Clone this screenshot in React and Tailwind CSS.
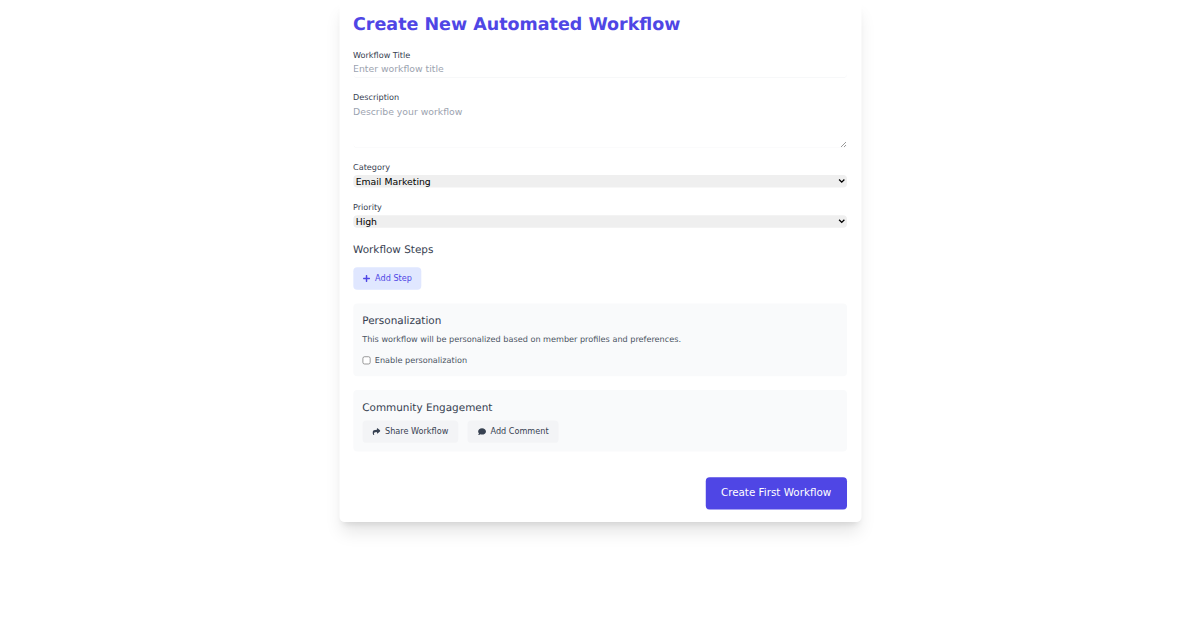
import { FaPlus, FaShare, FaComment } from 'react-icons/fa';

const fieldLabel = 'block text-[12.3px] leading-4 text-[#374151]';
const selectBox = 'block h-[19px] w-full rounded-md bg-[#efefef] text-[14.1px] leading-[19px] text-black';
const softBtn = 'flex h-[34px] items-center gap-[7px] rounded-md bg-[#f3f4f6] px-[15.5px] text-[12.3px] text-[#374151]';

export default function App() {
  return (
    <div className="h-[630px] overflow-hidden bg-white font-['DejaVu_Sans',sans-serif] [text-rendering:geometricPrecision]">
      <div className="mx-auto h-[791px] w-[791px] origin-top scale-[0.66] rounded-lg bg-white pt-[19px] pr-[22.5px] pl-[20.5px] shadow-xl">
        <h2 className="text-[26.5px] leading-9 font-bold text-[#4f46e5]">Create New Automated Workflow</h2>

        <div className="mt-[20.5px]">
          <label className={fieldLabel}>Workflow Title</label>
          <input
            className="block h-[26.5px] w-full rounded-md border-b border-[#f3f4f6] text-[14.1px] outline-none placeholder:text-[#9ca3af]"
            placeholder="Enter workflow title"
          />
        </div>

        <div className="mt-[21px]">
          <label className={fieldLabel}>Description</label>
          <textarea
            className="block h-[69px] w-full rounded-md border-b border-[#f3f4f6] pt-[4px] text-[14.1px] outline-none placeholder:text-[#9ca3af]"
            placeholder="Describe your workflow"
          />
        </div>

        <div className="mt-[21px]">
          <label className={fieldLabel}>Category</label>
          <select className={`mt-1 ${selectBox}`}>
            <option>Email Marketing</option>
          </select>
        </div>

        <div className="mt-[22px]">
          <label className={fieldLabel}>Priority</label>
          <select className={`mt-1 ${selectBox}`}>
            <option>High</option>
          </select>
        </div>

        <h3 className="mt-[21.5px] text-[15.8px] leading-6 text-[#374151]">Workflow Steps</h3>

        <button className="mt-[14px] flex h-[34px] items-center gap-[7px] rounded-md bg-[#e0e7ff] px-[14.5px] text-[12.3px] text-[#4f46e5]">
          <FaPlus className="h-3 w-3" />
          Add Step
        </button>

        <div className="mt-[21px] h-[110px] rounded-md bg-[#f9fafb] px-3.5 pt-[14.5px]">
          <h3 className="text-[15.8px] leading-6 text-[#374151]">Personalization</h3>
          <p className="mt-2 text-[12.3px] leading-4 text-[#4b5563]">
            This workflow will be personalized based on member profiles and preferences.
          </p>
          <label className="mt-4 flex items-center gap-[7px] text-[12.3px] leading-4 text-[#4b5563]">
            <input type="checkbox" className="h-3 w-3 appearance-none rounded-[3px] border-[1.5px] border-[#666666] bg-white" />
            Enable personalization
          </label>
        </div>

        <div className="mt-[21px] h-[93px] rounded-md bg-[#f9fafb] px-3.5 pt-[15.5px]">
          <h3 className="text-[15.8px] leading-6 text-[#374151]">Community Engagement</h3>
          <div className="mt-[7px] flex gap-3.5">
            <button className={softBtn}>
              <FaShare className="h-3 w-3" />
              Share Workflow
            </button>
            <button className={softBtn}>
              <FaComment className="h-3 w-3" />
              Add Comment
            </button>
          </div>
        </div>

        <div className="mt-[39.5px] flex justify-end">
          <button className="h-[48.5px] w-[214px] rounded-md bg-[#4f46e5] text-[15.7px] text-white">Create First Workflow</button>
        </div>
      </div>
    </div>
  );
}
